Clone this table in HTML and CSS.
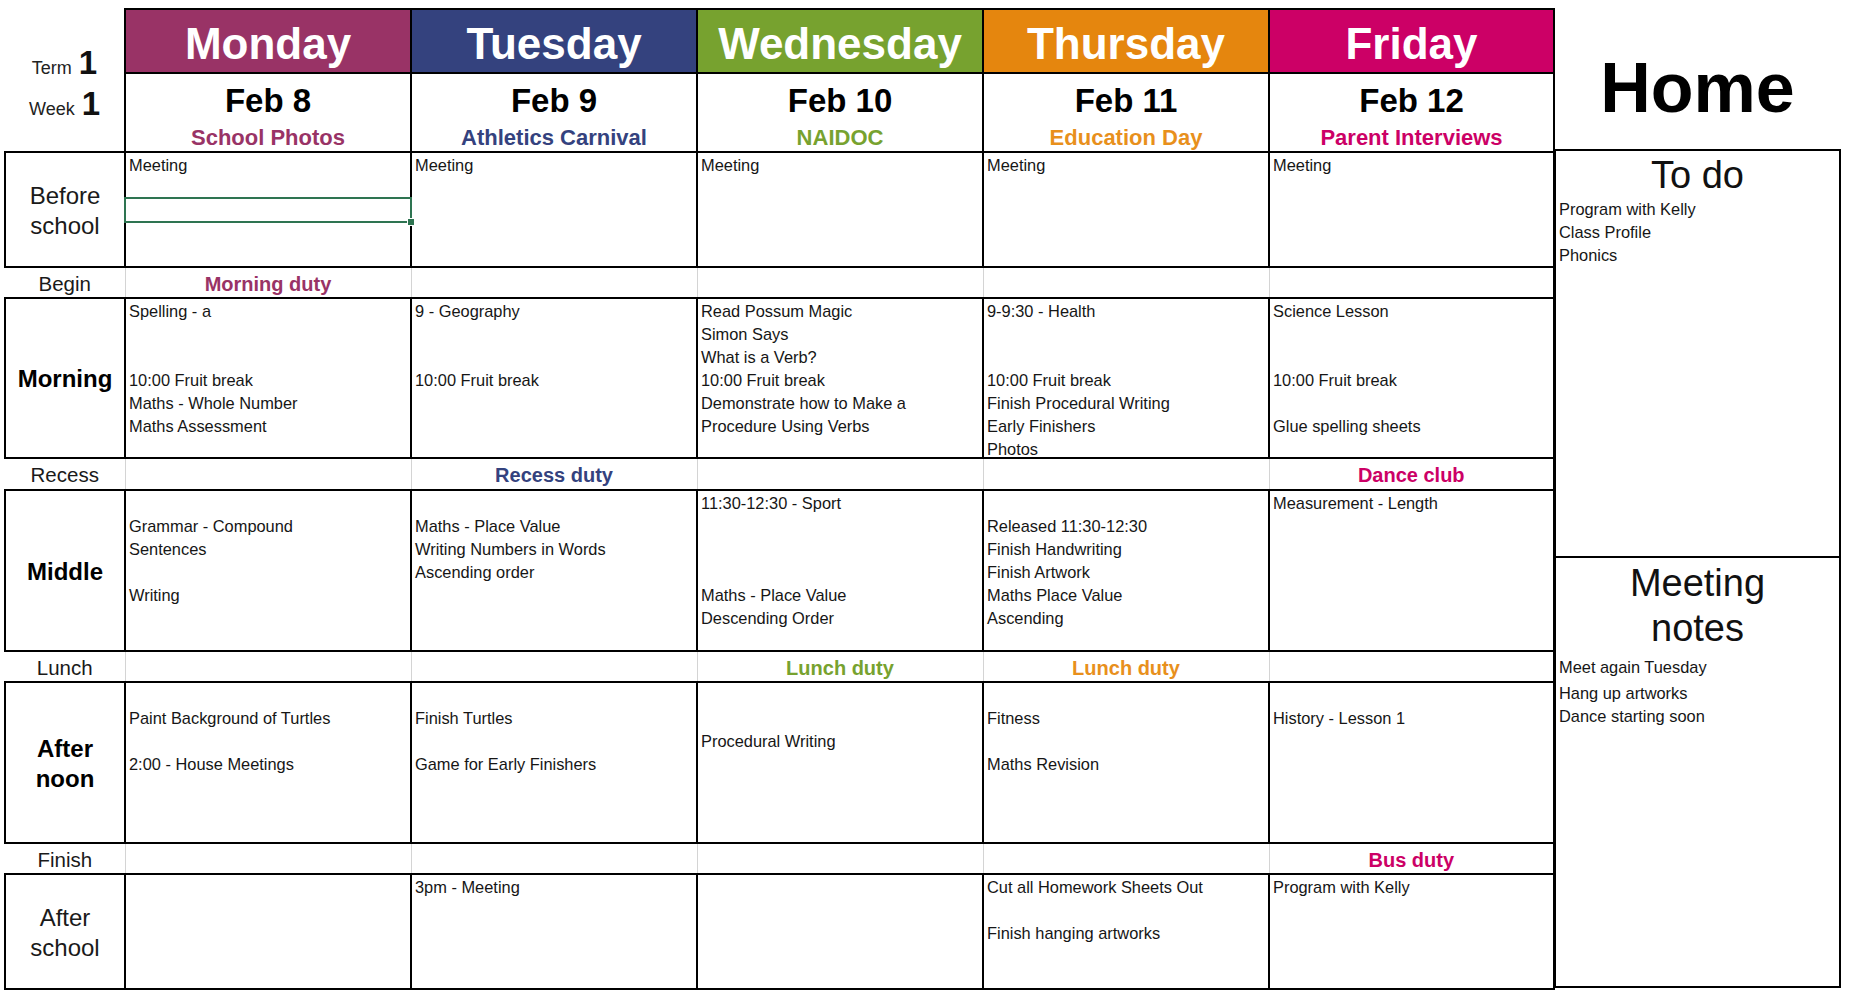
FILE: index.html
```html
<!DOCTYPE html>
<html lang="en">
<head>
<meta charset="utf-8">
<title>Weekly planner</title>
<link rel="stylesheet" href="styles.css">
</head>
<body>
<div class="page">
  <table class="week">
    <colgroup>
      <col class="c-label">
      <col class="c-day"><col class="c-day"><col class="c-day"><col class="c-day"><col class="c-day c-fri">
    </colgroup>
    <tr class="r-band">
      <td class="term" rowspan="2">
        <div class="tw"><span class="tw-word">Term</span>1</div>
        <div class="tw"><span class="tw-word">Week</span>1</div>
      </td>
      <td class="band mon">Monday</td>
      <td class="band tue">Tuesday</td>
      <td class="band wed">Wednesday</td>
      <td class="band thu">Thursday</td>
      <td class="band fri">Friday</td>
    </tr>
    <tr class="r-date">
      <td class="date"><div class="dt">Feb 8</div><div class="ev t-mon">School Photos</div></td>
      <td class="date"><div class="dt">Feb 9</div><div class="ev t-tue">Athletics Carnival</div></td>
      <td class="date"><div class="dt">Feb 10</div><div class="ev t-wed">NAIDOC</div></td>
      <td class="date"><div class="dt">Feb 11</div><div class="ev t-thu">Education Day</div></td>
      <td class="date"><div class="dt">Feb 12</div><div class="ev t-fri">Parent Interviews</div></td>
    </tr>

    <tr class="r-before">
      <td class="lbl">Before<br>school</td>
      <td class="cell"><div class="cc"><div class="ln">Meeting</div><div class="sel"></div></div></td>
      <td class="cell"><div class="cc"><div class="ln">Meeting</div></div></td>
      <td class="cell"><div class="cc"><div class="ln">Meeting</div></div></td>
      <td class="cell"><div class="cc"><div class="ln">Meeting</div></div></td>
      <td class="cell"><div class="cc"><div class="ln">Meeting</div></div></td>
    </tr>
    <tr class="r-trans">
      <td class="tlbl">Begin</td>
      <td class="duty t-mon">Morning duty</td>
      <td class="duty"></td>
      <td class="duty"></td>
      <td class="duty"></td>
      <td class="duty last"></td>
    </tr>

    <tr class="r-block">
      <td class="lbl bold">Morning</td>
      <td class="cell"><div class="cc">
        <div class="ln">Spelling - a</div><div class="ln"></div><div class="ln"></div>
        <div class="ln">10:00 Fruit break</div><div class="ln">Maths - Whole Number</div><div class="ln">Maths Assessment</div>
      </div></td>
      <td class="cell"><div class="cc">
        <div class="ln">9 - Geography</div><div class="ln"></div><div class="ln"></div>
        <div class="ln">10:00 Fruit break</div>
      </div></td>
      <td class="cell"><div class="cc">
        <div class="ln">Read Possum Magic</div><div class="ln">Simon Says</div><div class="ln">What is a Verb?</div>
        <div class="ln">10:00 Fruit break</div><div class="ln">Demonstrate how to Make a</div><div class="ln">Procedure Using Verbs</div>
      </div></td>
      <td class="cell"><div class="cc">
        <div class="ln">9-9:30 - Health</div><div class="ln"></div><div class="ln"></div>
        <div class="ln">10:00 Fruit break</div><div class="ln">Finish Procedural Writing</div><div class="ln">Early Finishers</div><div class="ln">Photos</div>
      </div></td>
      <td class="cell"><div class="cc">
        <div class="ln">Science Lesson</div><div class="ln"></div><div class="ln"></div>
        <div class="ln">10:00 Fruit break</div><div class="ln"></div><div class="ln">Glue spelling sheets</div>
      </div></td>
    </tr>
    <tr class="r-trans r-recess">
      <td class="tlbl">Recess</td>
      <td class="duty"></td>
      <td class="duty t-tue">Recess duty</td>
      <td class="duty"></td>
      <td class="duty"></td>
      <td class="duty last t-fri">Dance club</td>
    </tr>

    <tr class="r-block r-mid">
      <td class="lbl bold">Middle</td>
      <td class="cell"><div class="cc">
        <div class="ln"></div><div class="ln">Grammar - Compound</div><div class="ln">Sentences</div><div class="ln"></div><div class="ln">Writing</div>
      </div></td>
      <td class="cell"><div class="cc">
        <div class="ln"></div><div class="ln">Maths - Place Value</div><div class="ln">Writing Numbers in Words</div><div class="ln">Ascending order</div>
      </div></td>
      <td class="cell"><div class="cc">
        <div class="ln">11:30-12:30 - Sport</div><div class="ln"></div><div class="ln"></div><div class="ln"></div>
        <div class="ln">Maths - Place Value</div><div class="ln">Descending Order</div>
      </div></td>
      <td class="cell"><div class="cc">
        <div class="ln"></div><div class="ln">Released 11:30-12:30</div><div class="ln">Finish Handwriting</div>
        <div class="ln">Finish Artwork</div><div class="ln">Maths Place Value</div><div class="ln">Ascending</div>
      </div></td>
      <td class="cell"><div class="cc">
        <div class="ln">Measurement - Length</div>
      </div></td>
    </tr>
    <tr class="r-trans">
      <td class="tlbl">Lunch</td>
      <td class="duty"></td>
      <td class="duty"></td>
      <td class="duty t-wed">Lunch duty</td>
      <td class="duty t-thu">Lunch duty</td>
      <td class="duty last"></td>
    </tr>

    <tr class="r-block r-mid">
      <td class="lbl bold">After<br>noon</td>
      <td class="cell"><div class="cc">
        <div class="ln"></div><div class="ln">Paint Background of Turtles</div><div class="ln"></div><div class="ln">2:00 - House Meetings</div>
      </div></td>
      <td class="cell"><div class="cc">
        <div class="ln"></div><div class="ln">Finish Turtles</div><div class="ln"></div><div class="ln">Game for Early Finishers</div>
      </div></td>
      <td class="cell"><div class="cc">
        <div class="ln"></div><div class="ln"></div><div class="ln">Procedural Writing</div>
      </div></td>
      <td class="cell"><div class="cc">
        <div class="ln"></div><div class="ln">Fitness</div><div class="ln"></div><div class="ln">Maths Revision</div>
      </div></td>
      <td class="cell"><div class="cc">
        <div class="ln"></div><div class="ln">History - Lesson 1</div>
      </div></td>
    </tr>
    <tr class="r-trans">
      <td class="tlbl">Finish</td>
      <td class="duty"></td>
      <td class="duty"></td>
      <td class="duty"></td>
      <td class="duty"></td>
      <td class="duty last t-fri">Bus duty</td>
    </tr>

    <tr class="r-before">
      <td class="lbl">After<br>school</td>
      <td class="cell"><div class="cc"></div></td>
      <td class="cell"><div class="cc"><div class="ln">3pm - Meeting</div></div></td>
      <td class="cell"><div class="cc"></div></td>
      <td class="cell"><div class="cc">
        <div class="ln">Cut all Homework Sheets Out</div><div class="ln"></div><div class="ln">Finish hanging artworks</div>
      </div></td>
      <td class="cell"><div class="cc"><div class="ln">Program with Kelly</div></div></td>
    </tr>
  </table>

  <aside class="home">
    <div class="home-title">Home</div>
    <div class="home-box">
      <section class="todo">
        <h2 class="panel-title">To do</h2>
        <div class="ln">Program with Kelly</div>
        <div class="ln">Class Profile</div>
        <div class="ln">Phonics</div>
      </section>
      <section class="notes">
        <h2 class="panel-title">Meeting<br>notes</h2>
        <div class="ln n1">Meet again Tuesday</div>
        <div class="ln n2">Hang up artworks</div>
        <div class="ln">Dance starting soon</div>
      </section>
    </div>
  </aside>
</div>
</body>
</html>
```

FILE: styles.css
```css
* { box-sizing: border-box; }
html, body { margin: 0; padding: 0; background: #fff; }
body {
  font-family: "Liberation Sans", Arial, sans-serif;
  color: #111;
}

.page {
  display: flex;
  align-items: flex-start;
  width: 1852px;
  height: 998px;
  padding: 8px 0 0 4px;
  overflow: hidden;
}

/* ---------- main table ---------- */
.week {
  border-collapse: collapse;
  table-layout: fixed;
  width: 1549px;
  flex: none;
}
.c-label { width: 120px; }
.c-day { width: 286px; }
.c-fri { width: 285px; }

.week td {
  padding: 0;
  vertical-align: top;
}

.r-band { height: 64px; }
.r-date { height: 78px; }
.r-before { height: 115px; }
.r-trans { height: 31px; }
.r-recess { height: 32px; }
.r-block { height: 160px; }
.r-mid { height: 161px; }

/* term / week */
.week td.term {
  border: none;
  text-align: center;
  padding-top: 33px;
}
.tw {
  font-size: 33px;
  font-weight: bold;
  line-height: 41px;
  height: 41px;
}
.tw-word {
  font-size: 18px;
  font-weight: normal;
  margin-right: 7px;
  color: #222;
}

/* day bands */
.week td.band {
  border: 2px solid #000;
  color: #fff;
  font-weight: bold;
  font-size: 44px;
  line-height: 44px;
  text-align: center;
  vertical-align: middle;
  padding-top: 6px;
}
.mon { background: #993366; }
.tue { background: #34427e; }
.wed { background: #77a22f; }
.thu { background: #e5860e; }
.fri { background: #cc0066; }

.t-mon { color: #993366; }
.t-tue { color: #34427e; }
.t-wed { color: #77a22f; }
.t-thu { color: #e8901c; }
.t-fri { color: #cc0066; }

/* dates */
.week td.date {
  border: 2px solid #000;
  text-align: center;
  padding-top: 8px;
}
.dt {
  font-size: 33px;
  font-weight: bold;
  line-height: 38px;
  color: #000;
}
.ev {
  font-size: 22px;
  font-weight: bold;
  line-height: 26px;
  margin-top: 5px;
  white-space: nowrap;
}

/* row labels */
.week td.lbl {
  border: 2px solid #000;
  text-align: center;
  vertical-align: middle;
  font-size: 24px;
  line-height: 30px;
  padding-top: 2px;
  color: #1a1a1a;
}
.week td.lbl.bold { font-weight: bold; color: #000; }

/* content cells */
.week td.cell {
  border: 2px solid #000;
  padding-left: 3px;
  padding-top: 1px;
}
.cc {
  position: relative;
  height: 0;
  overflow: visible;
}
.ln {
  height: 23px;
  line-height: 23px;
  font-size: 16.4px;
  white-space: nowrap;
  color: #161616;
}

/* excel selection */
.sel {
  position: absolute;
  left: -5px;
  right: -2px;
  top: 43px;
  height: 26px;
  border: 2px solid #2e7451;
}
.sel::after {
  content: "";
  position: absolute;
  right: -5px;
  bottom: -5px;
  width: 6px;
  height: 6px;
  background: #2e7451;
  border: 1px solid #fff;
}

/* transition rows */
.week td.tlbl {
  border-right: 1px solid #d4d4d4;
  text-align: center;
  vertical-align: middle;
  font-size: 20.5px;
  padding-top: 2px;
  color: #1a1a1a;
}
.week td.duty {
  border-left: 1px solid #d4d4d4;
  border-right: 1px solid #d4d4d4;
  text-align: center;
  vertical-align: middle;
  font-size: 20px;
  font-weight: bold;
  padding-top: 3px;
}
.week td.duty.last { border-right: 2px solid #000; }

/* ---------- home column ---------- */
.home {
  flex: none;
  width: 287px;
  margin-left: -1px;
  margin-top: -8px;
}
.home-title {
  height: 149px;
  display: flex;
  align-items: center;
  justify-content: center;
  padding-top: 26px;
  font-size: 70px;
  font-weight: bold;
  color: #000;
}
.home-box {
  border: 2px solid #000;
  height: 839px;
  display: flex;
  flex-direction: column;
}
.todo {
  height: 405px;
  padding: 2px 0 0 3px;
}
.notes {
  flex: 1;
  border-top: 2px solid #000;
  padding: 3px 0 0 3px;
}
.panel-title {
  margin: 0;
  font-size: 38px;
  font-weight: normal;
  line-height: 45px;
  text-align: center;
  color: #111;
  padding-right: 3px;
}
.n1 { margin-top: 5px; }
.n2 { margin-top: 3px; }
```
